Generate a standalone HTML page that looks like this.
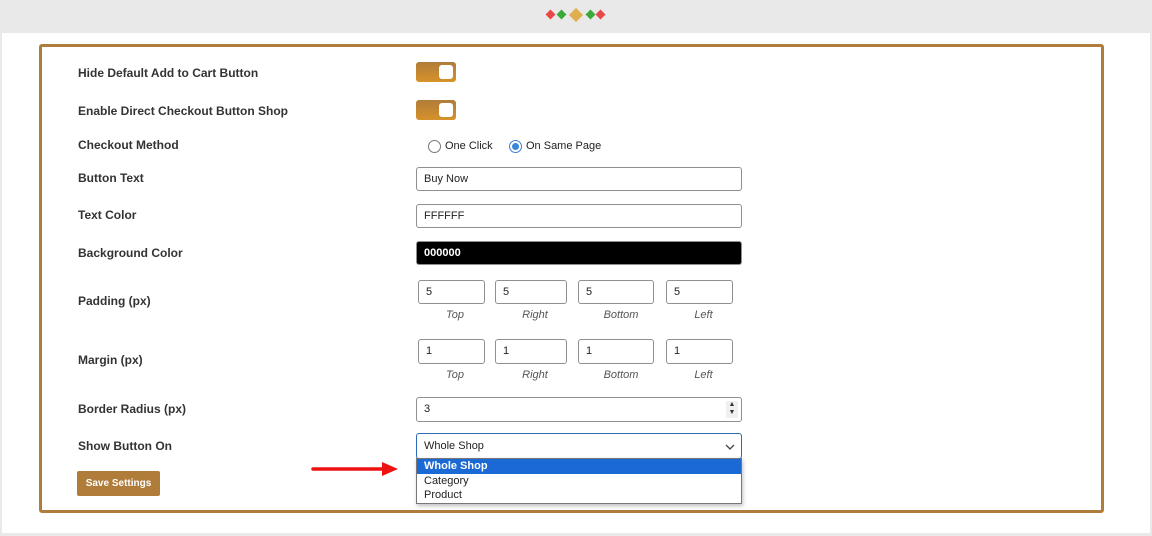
<!DOCTYPE html>
<html><head><style>
*{box-sizing:border-box;margin:0;padding:0}
body{width:1152px;height:536px;background:#e9e9e9;font-family:"Liberation Sans",Arial,sans-serif;position:relative;overflow:hidden}
.panel{position:absolute;left:2px;top:33px;width:1148px;height:500px;background:#fff}
.frame{position:absolute;left:39px;top:44px;width:1065px;height:469px;border:3px solid #b07c3a;border-radius:3px}
.a{position:absolute}
.lbl{position:absolute;left:78px;font-size:12px;font-weight:bold;color:#333;line-height:14px}
.tog{position:absolute;left:416px;width:40px;height:20px;border-radius:3px;background:linear-gradient(#b07c3a,#d6922a)}
.tog:after{content:"";position:absolute;right:3px;top:3px;width:14px;height:14px;background:#fff;border-radius:3px}
.inp{position:absolute;border:1px solid #8f8f8f;border-radius:3px;background:#fff;font-size:11px;color:#222;padding-left:7px;display:flex;align-items:center;line-height:13px}
.cap{position:absolute;font-size:11px;font-style:italic;color:#555;text-align:center}
.rad{position:absolute;width:13px;height:13px;border:1px solid #777;border-radius:50%;background:#fff}
</style></head><body>
<div class="panel"></div>
<div class="a" style="left:547px;top:11px;width:7px;height:7px;background:#e84848;transform:rotate(45deg)"></div>
<div class="a" style="left:558px;top:11px;width:7px;height:7px;background:#3aaa3a;transform:rotate(45deg)"></div>
<div class="a" style="left:571px;top:10px;width:10px;height:10px;background:#e0b050;transform:rotate(45deg)"></div>
<div class="a" style="left:587px;top:11px;width:7px;height:7px;background:#3aaa3a;transform:rotate(45deg)"></div>
<div class="a" style="left:597px;top:11px;width:7px;height:7px;background:#e84848;transform:rotate(45deg)"></div>
<div class="frame"></div>

<div class="lbl" style="top:66px">Hide Default Add to Cart Button</div>
<div class="lbl" style="top:104px">Enable Direct Checkout Button Shop</div>
<div class="lbl" style="top:138px">Checkout Method</div>
<div class="lbl" style="top:171px">Button Text</div>
<div class="lbl" style="top:208px">Text Color</div>
<div class="lbl" style="top:246px">Background Color</div>
<div class="lbl" style="top:294px">Padding (px)</div>
<div class="lbl" style="top:353px">Margin (px)</div>
<div class="lbl" style="top:402px">Border Radius (px)</div>
<div class="lbl" style="top:439px">Show Button On</div>

<div class="tog" style="top:62px"></div>
<div class="tog" style="top:100px"></div>

<div class="rad" style="left:428px;top:140px"></div>
<div class="a" style="left:445px;top:140px;font-size:11px;color:#222">One Click</div>
<div class="rad" style="left:509px;top:140px;border-color:#3a7fd0"><div style="position:absolute;left:2px;top:2px;width:7px;height:7px;border-radius:50%;background:#3a86d6"></div></div>
<div class="a" style="left:526px;top:140px;font-size:11px;color:#222">On Same Page</div>

<div class="inp" style="left:416px;top:167px;width:326px;height:24px">Buy Now</div>
<div class="inp" style="left:416px;top:204px;width:326px;height:24px">FFFFFF</div>
<div class="inp" style="left:416px;top:241px;width:326px;height:24px;background:#000;color:#fff;font-weight:bold">000000</div>

<div class="inp" style="left:418px;top:280px;width:67px;height:24px">5</div>
<div class="inp" style="left:495px;top:280px;width:72px;height:24px">5</div>
<div class="inp" style="left:578px;top:280px;width:76px;height:24px">5</div>
<div class="inp" style="left:666px;top:280px;width:67px;height:24px">5</div>
<div class="cap" style="left:418px;top:309px;width:74px">Top</div>
<div class="cap" style="left:495px;top:309px;width:80px">Right</div>
<div class="cap" style="left:578px;top:309px;width:86px">Bottom</div>
<div class="cap" style="left:666px;top:309px;width:75px">Left</div>

<div class="inp" style="left:418px;top:339px;width:67px;height:25px">1</div>
<div class="inp" style="left:495px;top:339px;width:72px;height:25px">1</div>
<div class="inp" style="left:578px;top:339px;width:76px;height:25px">1</div>
<div class="inp" style="left:666px;top:339px;width:67px;height:25px">1</div>
<div class="cap" style="left:418px;top:369px;width:74px">Top</div>
<div class="cap" style="left:495px;top:369px;width:80px">Right</div>
<div class="cap" style="left:578px;top:369px;width:86px">Bottom</div>
<div class="cap" style="left:666px;top:369px;width:75px">Left</div>

<div class="inp" style="left:416px;top:397px;width:326px;height:25px">3
<div style="position:absolute;right:3px;top:3px;width:12px;height:17px;background:#f0f0f0;font-size:7px;line-height:8px;text-align:center;color:#333">▲<br>▼</div></div>

<div class="inp" style="left:416px;top:433px;width:326px;height:26px;border-color:#2c6ab8">Whole Shop
<svg style="position:absolute;right:6px;top:10px" width="10" height="6"><path d="M1 1L5 5L9 1" fill="none" stroke="#444" stroke-width="1.3"/></svg></div>
<div class="a" style="left:416px;top:458px;width:326px;height:46px;border:1px solid #777;background:#fff;font-size:11px;color:#222;box-shadow:1px 2px 4px rgba(0,0,0,.25)">
<div style="background:#1a69d4;color:#fff;font-weight:bold;padding-left:7px;height:15px;line-height:15px">Whole Shop</div>
<div style="padding-left:7px;height:14px;line-height:14px">Category</div>
<div style="padding-left:7px;height:14px;line-height:14px">Product</div>
</div>

<div class="a" style="left:77px;top:471px;width:83px;height:25px;background:#b07c3a;border-radius:2px;color:#fff;font-size:10px;font-weight:bold;text-align:center;line-height:25px">Save Settings</div>

<svg class="a" style="left:310px;top:460px" width="90" height="18"><path d="M3 9H75" stroke="#ee1111" stroke-width="3.5" stroke-linecap="round"/><path d="M72 2L88 9L72 16Z" fill="#ee1111"/></svg>
</body></html>
